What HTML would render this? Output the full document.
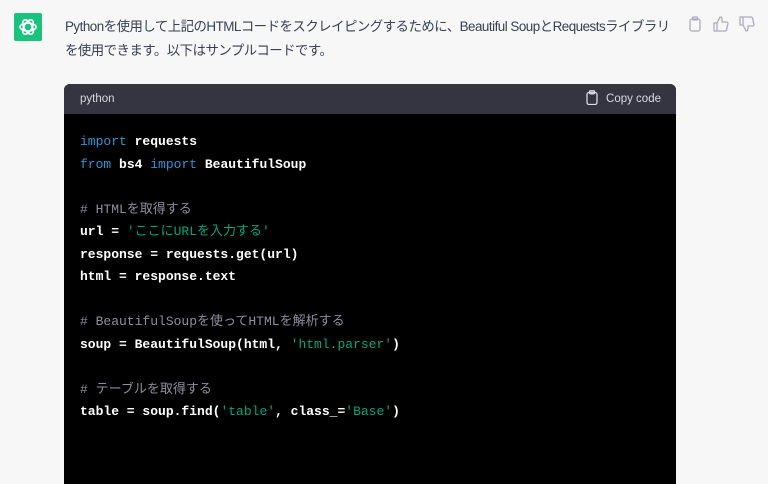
<!DOCTYPE html>
<html><head><meta charset="utf-8"><style>
body{margin:0;width:768px;height:441px;background:#f7f7f8;overflow:hidden;position:relative;font-family:"Liberation Sans","Noto Sans CJK JP",sans-serif}
.av{position:absolute;left:14px;top:13px;width:28px;height:28px;background:#19c37d;border-radius:2px}
.txt{position:absolute;left:65px;top:15px;width:610px;font-size:13.4px;line-height:24px;color:#374151;white-space:nowrap;letter-spacing:-0.5px}
.code{position:absolute;left:64px;top:84px;width:612px;height:400px;background:#000;border-radius:6px 6px 0 0;overflow:hidden}
.hd{height:30px;background:#343541;color:#d9d9e3;font-size:11.5px;line-height:30px;padding:0 16px;position:relative}
.cp{position:absolute;right:15px;top:0}
pre{margin:0;padding:17px 16px;font-family:"Liberation Mono","Noto Sans CJK JP",monospace;font-size:13px;line-height:22.5px;color:#fff;font-weight:bold}
.k{color:#2e95d3;font-weight:normal}.s{color:#00a67d;font-weight:normal}.c{color:#8e8ea0;font-weight:normal}
.ic{position:absolute;top:16px}
</style></head><body>
<div class="av"><svg width="28" height="28" viewBox="0 0 28 28"><g fill="none" stroke="#fff" stroke-width="1.6"><ellipse cx="14" cy="14" rx="8" ry="4" /><ellipse cx="14" cy="14" rx="8" ry="4" transform="rotate(60 14 14)"/><ellipse cx="14" cy="14" rx="8" ry="4" transform="rotate(120 14 14)"/></g></svg></div>
<div class="txt">Pythonを使用して上記のHTMLコードをスクレイピングするために、Beautiful SoupとRequestsライブラリ<br>を使用できます。以下はサンプルコードです。</div>
<svg class="ic" style="left:688px" width="14" height="16" viewBox="0 0 14 16" fill="none" stroke="#acacbe" stroke-width="1.3"><rect x="2" y="3" width="10" height="12" rx="2"/><rect x="4.5" y="1" width="5" height="3" rx="1"/></svg>
<svg class="ic" style="left:713px" width="16" height="16" viewBox="0 0 16 16" fill="none" stroke="#acacbe" stroke-width="1.3"><path d="M1 7h3v8H1zM4 7l3-6c1.5 0 2 1 2 2v3h4.5c1 0 1.6.8 1.4 1.7l-1.2 5.6c-.2.8-.8 1.7-1.7 1.7H4"/></svg>
<svg class="ic" style="left:739px" width="16" height="16" viewBox="0 0 16 16" fill="none" stroke="#acacbe" stroke-width="1.3"><path d="M1 1h3v8H1zM4 9l3 6c1.5 0 2-1 2-2v-3h4.5c1 0 1.6-.8 1.4-1.7L13.7 2.7C13.5 1.9 12.9 1 12 1H4"/></svg>
<div class="code"><div class="hd">python<span class="cp"><svg width="12" height="15" viewBox="0 0 12 15" style="vertical-align:-3px;margin-right:8px" fill="none" stroke="#d9d9e3" stroke-width="1.3"><rect x="1" y="2.5" width="10" height="12" rx="2"/><rect x="3.5" y="0.8" width="5" height="3" rx="1"/></svg>Copy code</span></div>
<pre><span class="k">import</span> requests
<span class="k">from</span> bs4 <span class="k">import</span> BeautifulSoup

<span class="c"># HTMLを取得する</span>
url = <span class="s">'ここにURLを入力する'</span>
response = requests.get(url)
html = response.text

<span class="c"># BeautifulSoupを使ってHTMLを解析する</span>
soup = BeautifulSoup(html, <span class="s">'html.parser'</span>)

<span class="c"># テーブルを取得する</span>
table = soup.find(<span class="s">'table'</span>, class_=<span class="s">'Base'</span>)</pre></div>
</body></html>
